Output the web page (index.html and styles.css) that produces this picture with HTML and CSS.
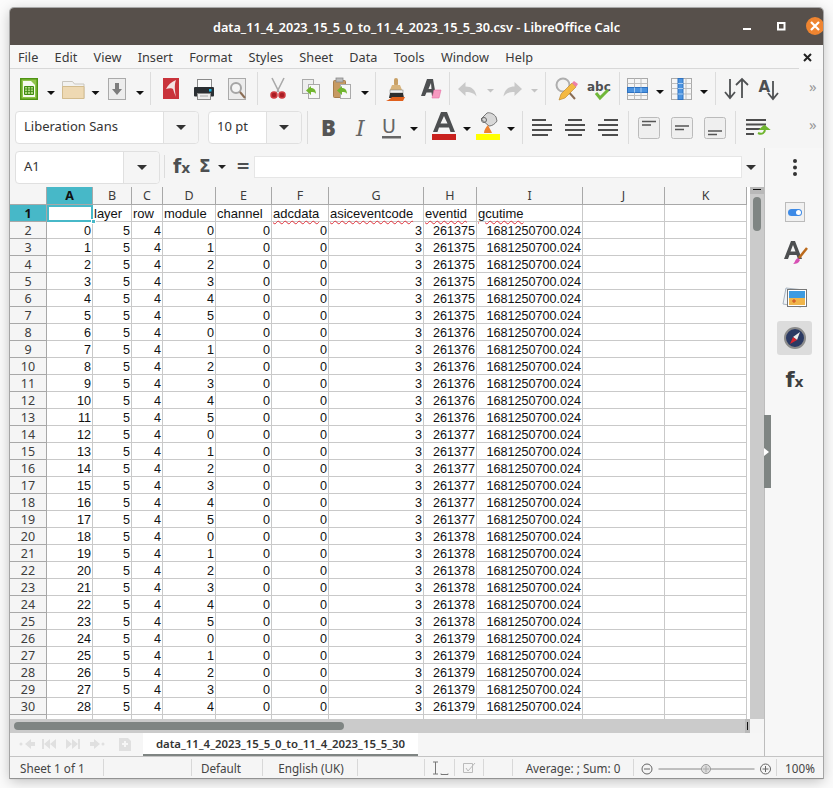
FILE: index.html
```html
<!DOCTYPE html>
<html lang="en">
<head>
    <meta charset="UTF-8">
    <meta name="viewport" content="width=device-width, initial-scale=1.0">
    <title>LibreOffice Calc</title>
    <link rel="stylesheet" href="styles.css">
</head>
<body>
    <div class="Window">
        <div class="Title-Bar">
            <span class="Title-Text">data_11_4_2023_15_5_0_to_11_4_2023_15_5_30.csv - LibreOffice Calc</span>
            <svg class="Title-Controls" width="90" height="37" viewBox="723 8 90 37">
                <rect x="733" y="28" width="8" height="2" fill="#fff"/>
                <rect x="768" y="23" width="6.500" height="6.500" fill="none" stroke="#fff" stroke-width="2"/>
                <circle cx="805" cy="26" r="9" fill="#ee8430"/>
                <path d="M801 22l8 8M809 22l-8 8" stroke="#fff" stroke-width="2.200"/>
            </svg>
        </div>

        <div class="Menu-Row">
            <div class="Menu-Bar">
                <span>File</span><span>Edit</span><span>View</span><span>Insert</span><span>Format</span><span>Styles</span><span>Sheet</span><span>Data</span><span>Tools</span><span>Window</span><span>Help</span>
            </div>
            <svg class="Menu-Close" width="24" height="24" viewBox="799 45 24 24">
                <path d="M804 54l7 7M811 54l-7 7" stroke="#222" stroke-width="2"/>
            </svg>
        </div>

        <div class="Tool-Row">
            <svg width="130" height="38" viewBox="20 69 130 38">
                <rect x="20" y="78" width="18" height="22" fill="#4f9413"/>
                <rect x="21.500" y="79.500" width="15" height="19" fill="#8fc34a"/>
                <path d="M23 81h8l4 4v12H23z" fill="#f7fbef"/>
                <path d="M24.500 86.500h9v8h-9z" fill="#a9d47c" stroke="#3f8a10"/>
                <path d="M24.500 89h9M24.500 91.500h9M27.500 86.500v8M30.500 86.500v8" stroke="#3f8a10" stroke-width=".8"/>
                <path d="M47 91h8l-4 4z" fill="#111"/>
                <path d="M62.500 98.500V81.500h10l2 2.500h9.500v14.500z" fill="#f2f2f0" stroke="#c9c6bf"/>
                <path d="M62.500 98.500V86.500h21.500v12z" fill="#eed9b3" stroke="#d3bc8e"/>
                <path d="M91.500 91h8l-4 4z" fill="#111"/>
                <rect x="108.500" y="78.500" width="17" height="21" fill="#ededed" stroke="#aaa"/>
                <path d="M115 83h4v6h3l-5 6-5-6h3z" fill="#7d7d7d"/>
                <path d="M136 91h8l-4 4z" fill="#111"/>
            </svg>
            <div class="Tool-Sep"></div>
            <svg width="106" height="38" viewBox="151 69 106 38">
                <rect x="163" y="78" width="16" height="21" fill="#c9333b"/>
                <path d="M176 80c-5 2-8 5-10 9 3-1 6-1 7 0 1 3 2 6 3 8-1-5-2-12 0-17z" fill="#f3e3e3"/>
                <rect x="197.500" y="79.500" width="14" height="9" fill="#fbfbfb" stroke="#8b8b8b"/>
                <rect x="194" y="87" width="20" height="9.500" rx="1" fill="#2b2f33"/>
                <rect x="209" y="89" width="2.500" height="2.500" fill="#18b6e8"/>
                <rect x="197.500" y="93.500" width="13" height="6" fill="#eee" stroke="#8b8b8b"/>
                <path d="M200 96h8" stroke="#aaa"/>
                <rect x="228.500" y="78.500" width="17" height="21" fill="#ececec" stroke="#aaa"/>
                <circle cx="236" cy="88" r="5" fill="#f5f5f5" stroke="#a5a5a5" stroke-width="2"/>
                <path d="M240 92l5 6" stroke="#8a6d55" stroke-width="2"/>
            </svg>
            <div class="Tool-Sep"></div>
            <svg width="117" height="38" viewBox="258 69 117 38">
                <path d="M272 78l7 14M284 78l-7 14" stroke="#a9a9a9" stroke-width="1.600" fill="none"/>
                <circle cx="274" cy="95" r="3" fill="#a81d24" stroke="#cf3a3f" stroke-width="1.500"/>
                <circle cx="282" cy="95" r="3" fill="#a81d24" stroke="#cf3a3f" stroke-width="1.500"/>
                <rect x="302.500" y="79.500" width="11" height="14" fill="#eee" stroke="#aaa"/>
                <rect x="308.500" y="84.500" width="11" height="14" fill="#f7f7f7" stroke="#aaa"/>
                <path d="M311 86l-5 4.500 5 4.500v-3c2 0 4 0 5 2 0-4-2-6-5-6z" fill="#71b62f"/>
                <rect x="333.500" y="80.500" width="12" height="17" rx="1" fill="#c79a62" stroke="#a77e4c"/>
                <rect x="336" y="78" width="7" height="4" fill="#bbb" stroke="#888" stroke-width=".8"/>
                <rect x="340.500" y="84.500" width="10" height="14" fill="#f7f7f7" stroke="#aaa"/>
                <path d="M342 86l-5 4.500 5 4.500v-3c2 0 4 0 5 2 0-4-2-6-5-6z" fill="#71b62f"/>
                <path d="M361 91h8l-4 4z" fill="#111"/>
            </svg>
            <div class="Tool-Sep"></div>
            <svg width="73" height="38" viewBox="376 69 73 38">
                <rect x="394" y="78" width="4" height="8" rx="2" fill="#c8a066"/>
                <path d="M392 85h8l2 5h-12z" fill="#d8b47c"/>
                <rect x="390" y="90" width="13" height="3" fill="#f0f0f0" stroke="#777" stroke-width=".5"/>
                <path d="M390 93h13l1 5h-15z" fill="#2e2e2e"/>
                <path d="M386 101c3-1 5-3 6-4h13l-2 4z" fill="#e0601c"/>
                <path d="M421 96l6-17h6l3 17h-4l-.5-3.500h-5l-1.500 3.500zM428.500 89h3l-.5-6z" fill="#4d4f51"/>
                <path d="M434 90h7l-2 8h-7z" fill="#f69ac0" stroke="#e76ea4" stroke-width=".6"/>
            </svg>
            <div class="Tool-Sep"></div>
            <svg width="95" height="38" viewBox="450 69 95 38">
                <path d="M458 89l7.500-7v4.500c6 0 10 3 11 10-2-3-5-4.500-11-4.500V96z" fill="#c9c9c9"/>
                <path d="M487 89h7l-3.500 3.500z" fill="#c4c4c4"/>
                <path d="M522 89l-7.500-7v4.500c-6 0-10 3-11 10 2-3 5-4.500 11-4.500V96z" fill="#c9c9c9"/>
                <path d="M531 89h7l-3.500 3.500z" fill="#c4c4c4"/>
            </svg>
            <div class="Tool-Sep"></div>
            <svg width="73" height="38" viewBox="546 69 73 38">
                <circle cx="563" cy="85" r="6.500" fill="#f2f2f2" stroke="#aeaeae" stroke-width="2"/>
                <path d="M567 90l8 9" stroke="#8a6d55" stroke-width="2"/>
                <path d="M559 100l2-6 11-11 4 4-11 11z" fill="#f4b942" stroke="#b7812a" stroke-width=".6"/>
                <path d="M572 83l2-2 4 3-2 3z" fill="#ee7fa5"/>
                <text class="Svg-Abc" x="587" y="91">abc</text>
                <path d="M596 93l4 5 8-8" fill="none" stroke="#70b73a" stroke-width="3"/>
            </svg>
            <div class="Tool-Sep"></div>
            <svg width="95" height="38" viewBox="620 69 95 38">
                <rect x="627.500" y="78.500" width="20" height="21" fill="#f6f6f6" stroke="#aaa"/>
                <path d="M627.500 83.500h20M627.500 87.500h20M627.500 95.500h20M634.500 78.500v21M641 78.500v21" stroke="#bdbdbd"/>
                <rect x="627.500" y="87.500" width="20" height="5" fill="#4b93e0" stroke="#2f72c0"/>
                <path d="M634.500 87.500v5M641 87.500v5" stroke="#a8cdf3"/>
                <path d="M656 90h8l-4 4z" fill="#111"/>
                <rect x="671.500" y="78.500" width="20" height="21" fill="#f6f6f6" stroke="#aaa"/>
                <path d="M671.500 83.500h20M671.500 88.500h20M671.500 94h20M686 78.500v21" stroke="#bdbdbd"/>
                <rect x="678" y="78.500" width="5" height="21" fill="#4b93e0" stroke="#2f72c0"/>
                <path d="M678 83.500h5M678 88.500h5M678 94h5" stroke="#a8cdf3"/>
                <path d="M700 90h8l-4 4z" fill="#111"/>
            </svg>
            <div class="Tool-Sep"></div>
            <svg width="74" height="38" viewBox="716 69 74 38">
                <path d="M730 79v19M725 92l5 6 5-6M742 98V79M736 85l6-6 6 6" fill="none" stroke="#4f5153" stroke-width="1.800"/>
                <text class="Svg-Az" x="758.500" y="92">A</text>
                <path d="M773 81v18M768 93l5 6 5-6" fill="none" stroke="#4f5153" stroke-width="1.800"/>
            </svg>
            <span class="More-Tools">»</span>
        </div>

        <div class="Format-Row">
            <div class="Combo Font-Combo"><span>Liberation Sans</span><div class="Combo-Button"><i></i></div></div>
            <div class="Combo Size-Combo"><span>10 pt</span><div class="Combo-Button"><i></i></div></div>
            <div class="Format-Sep First-Sep"></div>
            <svg width="117" height="41" viewBox="308 107 117 41">
                <text class="Svg-Bold" x="321" y="136">B</text>
                <text class="Svg-Italic" x="356" y="136">I</text>
                <text class="Svg-Under" x="382" y="133">U</text>
                <rect x="382" y="136" width="19" height="2.500" fill="#666"/>
                <path d="M410 127h8l-4 4z" fill="#111"/>
            </svg>
            <div class="Format-Sep"></div>
            <svg width="96" height="41" viewBox="426 107 96 41">
                <path d="M433 132l8-20h6l8 20h-4.500l-1.500-4.500h-10l-1.500 4.500zM440.500 123.500h7l-3.500-7.500z" fill="#4d4f51"/>
                <rect x="432" y="134" width="24" height="6" fill="#c9211e"/>
                <path d="M463 127h8l-4 4z" fill="#111"/>
                <path d="M481 119l6-6c3-1 7 1 9 4l1 4c-2 3-5 5-8 5z" fill="#d8d8d8" stroke="#777"/>
                <circle cx="484" cy="120" r="2.500" fill="none" stroke="#666"/>
                <path d="M484 133c0-3 2-6 4-8 1 3 3 5 4 8z" fill="#ee8230"/>
                <rect x="476" y="134" width="24" height="6" fill="#ffff00"/>
                <path d="M507 127h8l-4 4z" fill="#111"/>
            </svg>
            <div class="Format-Sep"></div>
            <svg width="105" height="41" viewBox="523 107 105 41">
                <path d="M532 120h14M532 125h20M532 130h20M532 135h16" stroke="#4d4d4d" stroke-width="1.800"/>
                <path d="M568 120h14M565 125h20M565 130h20M568 135h14" stroke="#4d4d4d" stroke-width="1.800"/>
                <path d="M604 120h14M598 125h20M598 130h20M602 135h16" stroke="#4d4d4d" stroke-width="1.800"/>
            </svg>
            <div class="Format-Sep"></div>
            <svg width="106" height="41" viewBox="629 107 106 41">
                <rect x="638.500" y="117.500" width="21" height="21" rx="2" fill="#efefef" stroke="#bbb"/>
                <path d="M642 121.500h14M642 125h9" stroke="#555" stroke-width="1.500"/>
                <rect x="671.500" y="117.500" width="21" height="21" rx="2" fill="#efefef" stroke="#bbb"/>
                <path d="M675 126h14M675 129.500h9" stroke="#555" stroke-width="1.500"/>
                <rect x="704.500" y="117.500" width="21" height="21" rx="2" fill="#efefef" stroke="#bbb"/>
                <path d="M708 131h14M708 134.500h9" stroke="#555" stroke-width="1.500"/>
            </svg>
            <div class="Format-Sep"></div>
            <svg width="40" height="41" viewBox="736 107 40 41">
                <path d="M746 120h20M746 124.500h20M746 129h14M746 134h8" stroke="#4d4d4d" stroke-width="1.800"/>
                <path d="M758 133c4 2 7 0 7-4M761 129h7l-3.500-3z" fill="none" stroke="#6fb52f" stroke-width="2"/>
            </svg>
            <span class="More-Tools">»</span>
        </div>

        <div class="Main-Row">
            <div class="Left-Col">
                <div class="Formula-Bar">
                    <div class="Combo Name-Combo"><span>A1</span><div class="Combo-Button"><i></i></div></div>
                    <div class="Format-Sep Short-Sep"></div>
                    <span class="Formula-Fx">f<small>x</small></span>
                    <span class="Formula-Sum">Σ</span>
                    <i class="Small-Drop"></i>
                    <span class="Formula-Equals">=</span>
                    <div class="Formula-Input"></div>
                    <i class="Formula-Drop"></i>
                </div>

                <div class="Sheet-Row">
                    <div class="Sheet-Area">
                        <div class="Sheet" id="Sheet"></div>
                        <div class="Cell-Cursor"></div>
                        <div class="Cell-Handle"></div>
                    </div>
                    <div class="V-Scroll">
                        <div class="V-Split"><b></b></div>
                        <div class="V-Thumb"></div>
                    </div>
                </div>

                <div class="H-Row">
                    <div class="H-Scroll">
                        <div class="H-Thumb"></div>
                        <div class="H-Split"><b></b></div>
                    </div>
                </div>

                <div class="Tab-Bar">
                    <svg width="133" height="23" viewBox="10 733 133 23">
                        <g fill="#e0e0e0">
                            <circle cx="21" cy="744" r="1.500"/>
                            <path d="M25 744l6-5v3h4v4h-4v3z"/>
                            <path d="M42 739h2v10h-2zM50 739v10l-6-5zM56 739v10l-6-5z"/>
                            <path d="M66 739v10l6-5zM72 739v10l6-5zM78 739h2v10h-2z"/>
                            <path d="M100 744l-6-5v3h-4v4h4v3z"/>
                            <circle cx="103" cy="744" r="1.500"/>
                            <path d="M119 738h9l3 3v10h-12z"/>
                        </g>
                        <path d="M125 741v6M122 744h6" stroke="#f6f6f6" stroke-width="2"/>
                    </svg>
                    <div class="Sheet-Tab">data_11_4_2023_15_5_0_to_11_4_2023_15_5_30</div>
                </div>
            </div>

            <div class="Side-Bar">
                <svg class="Side-Dots" width="6" height="20" viewBox="0 0 6 20">
                    <circle cx="3" cy="3" r="2"/><circle cx="3" cy="9.500" r="2"/><circle cx="3" cy="16" r="2"/>
                </svg>
                <svg class="Side-Icon Side-Toggle" width="35" height="34" viewBox="777 195 35 34">
                    <rect x="785.500" y="202.500" width="19" height="19" fill="#f1f1f1" stroke="#bbb"/>
                    <rect x="788" y="209" width="14" height="7" rx="3.500" fill="#3d8ae6"/>
                    <circle cx="798.500" cy="212.500" r="2.500" fill="#fff"/>
                </svg>
                <svg class="Side-Icon Side-Style" width="35" height="34" viewBox="777 236 35 34">
                    <path d="M784 259l7-18h4l7 18h-4l-1.500-4h-7l-1.500 4zM790.500 251.500h5l-2.500-6.500z" fill="#4d4f51"/>
                    <path d="M807 248l-8 10" stroke="#bb6a1c" stroke-width="2.500"/>
                    <path d="M793 264c2-1 2-5 5-6l2 2c-1 3-4 4-7 4z" fill="#d750b4"/>
                </svg>
                <svg class="Side-Icon Side-Gallery" width="35" height="34" viewBox="777 280 35 34">
                    <path d="M786 288l18 2-3 17-18-3z" fill="#eef3f8" stroke="#a9b4c0"/>
                    <rect x="787.500" y="289.500" width="19" height="17" fill="#fff" stroke="#777"/>
                    <rect x="789" y="291" width="16" height="7" fill="#3d9be0"/>
                    <rect x="789" y="298" width="16" height="7" fill="#f0b54a"/>
                    <path d="M792 301h4M794 299v4" stroke="#d04a20"/>
                </svg>
                <div class="Side-Active">
                    <svg width="24" height="24" viewBox="0 0 24 24">
                        <circle cx="12" cy="12" r="10" fill="#2b3a63" stroke="#8b8b8b" stroke-width="2"/>
                        <path d="M17 6l-3 8-4-3z" fill="#eee"/>
                        <path d="M7 18l3-7 4 3z" fill="#d9252e"/>
                    </svg>
                </div>
                <span class="Side-Fx">f<small>x</small></span>
                <div class="Side-Handle"><i></i></div>
            </div>
        </div>

        <div class="Status-Bar">
            <div class="Status-Cell Status-Sheet">Sheet 1 of 1</div>
            <div class="Status-Cell Status-Blank"></div>
            <div class="Status-Cell Status-Style">Default</div>
            <div class="Status-Cell Status-Lang">English (UK)</div>
            <div class="Status-Cell Status-Blank2"></div>
            <div class="Status-Cell Status-Ins">
                <svg width="20" height="14" viewBox="0 0 20 14"><path d="M3 1h5M3 13h5M5.500 1v12M11 12.500v1h7v-1" fill="none" stroke="#777"/></svg>
            </div>
            <div class="Status-Cell Status-Check">
                <svg width="14" height="14" viewBox="0 0 14 14"><path d="M1.500 2.500h9v9h-9z" fill="none" stroke="#bbb"/><path d="M4 7l2 3 7-8" fill="none" stroke="#bbb"/></svg>
            </div>
            <div class="Status-Cell Status-Blank3"></div>
            <div class="Status-Cell Status-Sum">Average: ; Sum: 0</div>
            <div class="Status-Cell Status-Zoom">
                <svg width="142" height="20" viewBox="634 757 142 20">
                    <circle cx="647" cy="768" r="5" fill="none" stroke="#666"/>
                    <path d="M644 768h6" stroke="#666"/>
                    <path d="M658.500 768h96" stroke="#888"/>
                    <circle cx="706" cy="768" r="4.500" fill="#ddd" stroke="#999"/>
                    <path d="M703 768h6M706 765v6" stroke="#aaa"/>
                    <circle cx="765.500" cy="768" r="5" fill="none" stroke="#666"/>
                    <path d="M762.500 768h6M765.500 765v6" stroke="#666"/>
                </svg>
            </div>
            <div class="Status-Cell Status-Percent">100%</div>
        </div>
    </div>
    <script src="script.js"></script>
</body>
</html>
```

FILE: styles.css
```css
html, body {
    margin: 0;
    height: 788px;
    overflow: hidden;
    background-color: #fbfbfb;
}

body {
    padding: 8px 10px 0;
    box-sizing: border-box;
    font-family: "Noto Sans", sans-serif;
    color: #333;
}

svg {
    display: block;
    flex: none;
}

.Svg-Abc {
    font-family: "DejaVu Sans", sans-serif;
    font-weight: 700;
    font-size: 12px;
    fill: #4d4f51;
}

.Svg-Az {
    font-family: "DejaVu Sans", sans-serif;
    font-weight: 700;
    font-size: 15px;
    fill: #4d4f51;
}

.Svg-Bold {
    font-family: "Open Sans", sans-serif;
    font-weight: 800;
    font-size: 22px;
    fill: #555;
}

.Svg-Italic {
    font-family: "DejaVu Serif", serif;
    font-style: italic;
    font-size: 22px;
    fill: #666;
}

.Svg-Under {
    font-family: "DejaVu Sans", sans-serif;
    font-size: 19px;
    fill: #666;
}

.Window {
    width: 813px;
    height: 770px;
    display: flex;
    flex-direction: column;
    background-color: #f5f5f5;
    border-radius: 4px 4px 0 0;
    box-shadow: 0 1px 1px #8f8f8f, 0 0 0 1px #a8a8a8, 0 3px 14px rgba(0, 0, 0, 0.25);
}

.Title-Bar {
    height: 37px;
    flex: none;
    position: relative;
    display: flex;
    align-items: center;
    justify-content: center;
    background-color: #57504b;
    border-radius: 4px 4px 0 0;
}

.Title-Text {
    color: #fff;
    font-size: 12.66px;
    font-weight: 600;
}

.Title-Controls {
    position: absolute;
    right: 0;
    top: 0;
}

.Menu-Row {
    height: 24px;
    flex: none;
    display: flex;
    background-color: #f7f7f7;
}

.Menu-Bar {
    flex: 1;
    display: flex;
    gap: 16.3px;
    align-items: center;
    padding-left: 8px;
    font-size: 12.7px;
    color: #3a3a3a;
    border-bottom: 1px solid #d8d8d8;
}

.Tool-Row {
    height: 38px;
    flex: none;
    display: flex;
    padding-left: 10px;
    position: relative;
}

.Tool-Sep, .Format-Sep {
    flex: none;
    width: 1px;
    height: 33px;
    margin-top: 3px;
    background-color: #dcdcdc;
}

.More-Tools {
    position: absolute;
    right: 2px;
    top: 7px;
    width: 12px;
    font-size: 15px;
    color: #9a9a9a;
}

.Format-Row {
    height: 41px;
    flex: none;
    display: flex;
    padding-left: 5px;
    position: relative;
}

.Format-Sep {
    margin-top: 4px;
}

.First-Sep {
    margin-left: 5px;
}

.Combo {
    flex: none;
    display: flex;
    align-items: stretch;
    box-sizing: border-box;
    height: 33px;
    margin-top: 4px;
    background-color: #fff;
    border: 1px solid #e0e0e0;
    border-radius: 4px;
    font-size: 13px;
}

.Combo span {
    flex: 1;
    padding-left: 8px;
    line-height: 29px;
}

.Combo-Button {
    flex: none;
    display: flex;
    align-items: center;
    justify-content: center;
    background-color: #f5f5f5;
    border-left: 1px solid #e0e0e0;
    border-radius: 0 4px 4px 0;
}

.Combo-Button i {
    width: 0;
    height: 0;
    border-left: 5px solid transparent;
    border-right: 5px solid transparent;
    border-top: 5px solid #333;
}

.Font-Combo {
    width: 184px;
}

.Font-Combo .Combo-Button {
    width: 34px;
}

.Size-Combo {
    width: 94px;
    margin-left: 9px;
}

.Size-Combo .Combo-Button {
    width: 34px;
}

.Main-Row {
    flex: 1;
    display: flex;
    min-height: 0;
}

.Left-Col {
    width: 754px;
    flex: none;
    display: flex;
    flex-direction: column;
}

.Formula-Bar {
    height: 39px;
    flex: none;
    display: flex;
    align-items: flex-start;
    padding-left: 5px;
}

.Name-Combo {
    width: 145px;
    height: 33px;
    margin-top: 3px;
}

.Name-Combo .Combo-Button {
    width: 35px;
}

.Short-Sep {
    height: 23px;
    margin: 7px 0 0 4px;
}

.Formula-Fx {
    margin: 5px 0 0 8px;
    width: 26px;
    font-family: "DejaVu Sans", sans-serif;
    font-weight: 700;
    font-size: 19px;
    line-height: 26px;
    color: #4d4f51;
}

.Formula-Fx small, .Side-Fx small {
    font-size: 14px;
}

.Formula-Sum {
    width: 16px;
    margin-top: 5px;
    font-family: "DejaVu Sans", sans-serif;
    font-weight: 700;
    font-size: 17px;
    line-height: 26px;
    color: #4d4f51;
}

.Small-Drop {
    margin: 17px 0 0 3px;
    width: 0;
    height: 0;
    border-left: 4px solid transparent;
    border-right: 4px solid transparent;
    border-top: 4px solid #222;
}

.Formula-Equals {
    margin: 5px 0 0 10px;
    width: 14px;
    font-family: "DejaVu Sans", sans-serif;
    font-weight: 700;
    font-size: 17px;
    line-height: 26px;
    color: #4d4f51;
}

.Formula-Input {
    width: 488px;
    height: 22px;
    margin: 8px 0 0 4px;
    box-sizing: border-box;
    background-color: #fff;
    border: 1px solid #e6e6e6;
}

.Formula-Drop {
    margin: 17px 0 0 4px;
    width: 0;
    height: 0;
    border-left: 5px solid transparent;
    border-right: 5px solid transparent;
    border-top: 5px solid #333;
}

.Sheet-Row {
    height: 532px;
    flex: none;
    display: flex;
}

.Sheet-Area {
    width: 740px;
    position: relative;
    overflow: hidden;
    background-color: #fff;
}

.Sheet {
    display: grid;
    grid-template-columns: 37px 46px 39px 31px 53px 56px 57px 95px 53px 106px 82px 82px;
    grid-template-rows: 18px;
    grid-auto-rows: 17px;
    width: 737px;
    font-family: "Liberation Sans", sans-serif;
    font-size: 12.6px;
    color: #111;
}

.Cell {
    box-sizing: border-box;
    padding: 0 1px;
    line-height: 19px;
    text-align: right;
    white-space: nowrap;
    overflow: hidden;
    border-right: 1px solid #c9c9c9;
    border-bottom: 1px solid #c9c9c9;
}

.Cell-Text {
    text-align: left;
    overflow: visible;
    font-size: 13px;
    line-height: 18px;
}

.Spell {
    text-decoration: underline wavy #e0303a 1px;
    text-underline-offset: 2px;
}

.Head {
    box-sizing: border-box;
    text-align: center;
    font-family: "Noto Sans", sans-serif;
    font-size: 12.5px;
    line-height: 18px;
    color: #3d3d3d;
    background-color: #f5f5f5;
    border-right: 1px solid #a8a8a8;
    border-bottom: 1px solid #a8a8a8;
}

.Col-Head {
    height: 18px;
    line-height: 18px;
}

.Sheet .Head-Active {
    background-color: #47b8c8;
    color: #111;
    font-weight: 700;
}

.Cell-Cursor {
    position: absolute;
    left: 37px;
    top: 18px;
    width: 46px;
    height: 17px;
    box-sizing: border-box;
    border: 2px solid #47b8c8;
}

.Cell-Handle {
    position: absolute;
    left: 81px;
    top: 32px;
    width: 3px;
    height: 3px;
    background-color: #47b8c8;
    border: 1px solid #fff;
}

.V-Scroll {
    width: 14px;
    flex: none;
    position: relative;
    background-color: #cbcbcb;
}

.V-Split {
    height: 7px;
    background-color: #b9b9b9;
    display: flex;
    justify-content: center;
    padding-top: 2px;
    box-sizing: border-box;
}

.V-Split b {
    display: block;
    width: 8px;
    height: 1px;
    background-color: #111;
}

.V-Thumb {
    position: absolute;
    left: 3px;
    top: 10px;
    width: 8px;
    height: 34px;
    border-radius: 4px;
    background-color: #7f8583;
}

.H-Row {
    height: 14px;
    flex: none;
}

.H-Scroll {
    width: 740px;
    height: 14px;
    position: relative;
    background-color: #cbcbcb;
}

.H-Thumb {
    position: absolute;
    left: 4px;
    top: 3px;
    width: 330px;
    height: 8px;
    border-radius: 4px;
    background-color: #7f8583;
}

.H-Split {
    position: absolute;
    right: 0;
    top: 0;
    width: 5px;
    height: 14px;
    background-color: #b9b9b9;
    display: flex;
    align-items: center;
    justify-content: center;
}

.H-Split b {
    display: block;
    width: 1px;
    height: 8px;
    background-color: #111;
}

.Tab-Bar {
    flex: 1;
    display: flex;
    background-color: #f6f6f6;
}

.Sheet-Tab {
    width: 275px;
    box-sizing: border-box;
    text-align: center;
    background-color: #fff;
    border-bottom: 3px solid #7f8583;
    font-size: 11.4px;
    font-weight: 600;
    line-height: 21px;
    color: #333;
}

.Side-Bar {
    flex: 1;
    position: relative;
    display: flex;
    flex-direction: column;
    align-items: center;
    box-sizing: border-box;
    padding: 0 0 0 1px;
    background-color: #f7f7f7;
    border-left: 1px solid #bdbdbd;
}

.Side-Dots {
    margin-top: 10px;
    fill: #333;
}

.Side-Toggle {
    margin-top: 17px;
}

.Side-Style {
    margin-top: 7px;
}

.Side-Gallery {
    margin-top: 10px;
}

.Side-Active {
    width: 35px;
    height: 34px;
    margin-top: 7px;
    display: flex;
    align-items: center;
    justify-content: center;
    background-color: #dcdcdc;
    border-radius: 3px;
}

.Side-Fx {
    margin-top: 8px;
    font-family: "DejaVu Sans", sans-serif;
    font-weight: 700;
    font-size: 21px;
    line-height: 34px;
    color: #3d3f41;
}

.Side-Handle {
    position: absolute;
    left: -1px;
    top: 267px;
    width: 7px;
    height: 73px;
    display: flex;
    align-items: center;
    background-color: #7f8583;
}

.Side-Handle i {
    width: 0;
    height: 0;
    border-top: 4px solid transparent;
    border-bottom: 4px solid transparent;
    border-left: 5px solid #fff;
}

.Status-Bar {
    height: 22px;
    flex: none;
    display: flex;
    box-sizing: border-box;
    border-top: 1px solid #c4c4c4;
    font-size: 11.7px;
    color: #444;
}

.Status-Cell {
    flex: none;
    box-sizing: border-box;
    display: flex;
    align-items: center;
    justify-content: center;
    height: 17px;
    margin-top: 2px;
    border-right: 1px solid #d8d8d8;
}

.Status-Sheet { width: 94px; justify-content: flex-start; padding-left: 10px; }
.Status-Blank { width: 88px; }
.Status-Style { width: 71px; padding-right: 12px; }
.Status-Lang { width: 95px; padding-left: 2px; }
.Status-Blank2 { width: 67px; }
.Status-Ins { width: 30px; }
.Status-Check { width: 29px; }
.Status-Blank3 { width: 29px; }
.Status-Sum { width: 121px; }
.Status-Zoom { width: 143px; }
.Status-Percent { width: 46px; border-right: none; }
```

FILE: script.js
```js
const columns = ["A", "B", "C", "D", "E", "F", "G", "H", "I", "J", "K"]
const headers = ["", "layer", "row", "module", "channel", "adcdata", "asiceventcode", "eventid", "gcutime", "", ""]
const misspelled = ["adcdata", "asiceventcode", "eventid", "gcutime"]

const createDiv = (className, content) => {
    const div = document.createElement("div")
    div.className = className
    div.innerText = content
    return div
}

const sheet = document.getElementById("Sheet")

sheet.appendChild(createDiv("Head Col-Head", ""))
columns.map((name, i) => {
    sheet.appendChild(createDiv("Head Col-Head" + (i === 0 ? " Head-Active" : ""), name))
})

sheet.appendChild(createDiv("Head Head-Active", "1"))
headers.map(text => {
    const cell = createDiv("Cell Cell-Text", "")
    if (misspelled.includes(text)) {
        const span = document.createElement("span")
        span.className = "Spell"
        span.innerText = text
        cell.appendChild(span)
    } else {
        cell.innerText = text
    }
    sheet.appendChild(cell)
})

for (let i = 0; i < 30; i++) {
    sheet.appendChild(createDiv("Head", i + 2))
    const row = i < 29
        ? [i, 5, 4, i % 6, 0, 0, 3, 261375 + Math.floor(i / 6), "1681250700.024", "", ""]
        : ["", "", "", "", "", "", "", "", "", "", ""]
    row.map(value => sheet.appendChild(createDiv("Cell", value)))
}
```
